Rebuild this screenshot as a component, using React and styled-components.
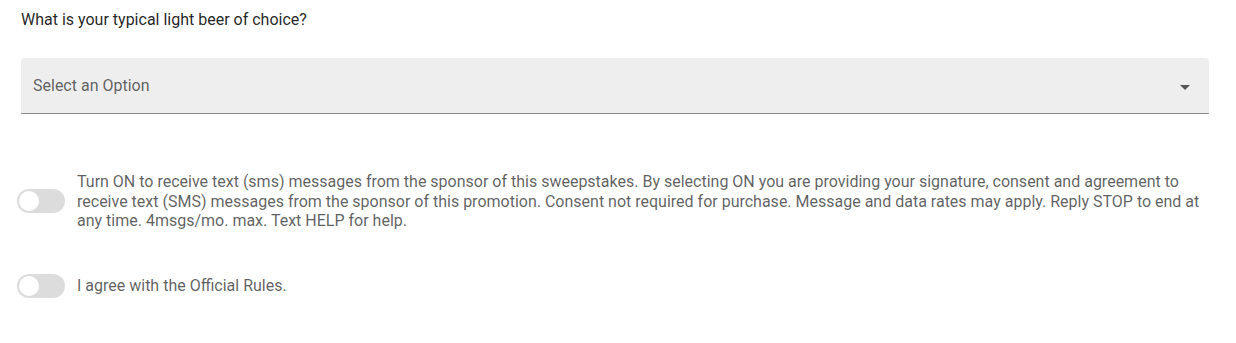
import React from "react";
import styled, { createGlobalStyle } from "styled-components";

const Global = createGlobalStyle`
  html, body { margin: 0; padding: 0; background: #fff; }
  body { font-family: Roboto, "Noto Sans", Arial, sans-serif; }
`;

const Page = styled.div`
  padding: 10px 27px 0 21px;
  width: 1236px;
  box-sizing: border-box;
`;

const Question = styled.div`
  font-size: 16px;
  line-height: 20px;
  color: rgba(0, 0, 0, 0.87);
`;

const SelectBox = styled.div`
  margin-top: 28px;
  height: 55px;
  background: #eeeeee;
  border-bottom: 1px solid #8a8a8a;
  border-radius: 4px 4px 0 0;
  display: flex;
  align-items: center;
  justify-content: space-between;
  padding: 0 19px 0 12px;
  box-sizing: content-box;
`;

const SelectText = styled.span`
  font-size: 16px;
  color: rgba(0, 0, 0, 0.62);
`;

const Arrow = styled.svg`
  width: 10px;
  height: 5px;
  margin-top: 4px;
`;

const ToggleList = styled.div`
  margin-top: 58px;
  display: flex;
  flex-direction: column;
  gap: 43px;
  margin-left: -4px;
`;

const Row = styled.div`
  display: flex;
  align-items: center;
  gap: 12px;
`;

const Track = styled.span`
  flex: 0 0 auto;
  width: 48px;
  height: 24px;
  border-radius: 12px;
  background: #dcdcdc;
  position: relative;
`;

const Thumb = styled.span`
  position: absolute;
  top: 2px;
  left: 2px;
  width: 20px;
  height: 20px;
  border-radius: 50%;
  background: #fff;
`;

const Label = styled.div`
  font-size: 16px;
  line-height: 19.5px;
  color: rgba(0, 0, 0, 0.64);
  max-width: 1135px;
`;

const Toggle = ({ children }) => (
  <Row>
    <Track>
      <Thumb />
    </Track>
    <Label>{children}</Label>
  </Row>
);

export default function App() {
  return (
    <Page>
      <Global />
      <Question>What is your typical light beer of choice?</Question>
      <SelectBox>
        <SelectText>Select an Option</SelectText>
        <Arrow viewBox="0 0 10 5">
          <path d="M0 0 L10 0 L5 5 Z" fill="#555" />
        </Arrow>
      </SelectBox>
      <ToggleList>
        <Toggle>
          Turn ON to receive text (sms) messages from the sponsor of this sweepstakes. By selecting ON you are providing your signature, consent and agreement to receive text (SMS) messages from the sponsor of this promotion. Consent not required for purchase. Message and data rates may apply. Reply STOP to end at any time. 4msgs/mo. max. Text HELP for help.
        </Toggle>
        <Toggle>I agree with the Official Rules.</Toggle>
      </ToggleList>
    </Page>
  );
}
